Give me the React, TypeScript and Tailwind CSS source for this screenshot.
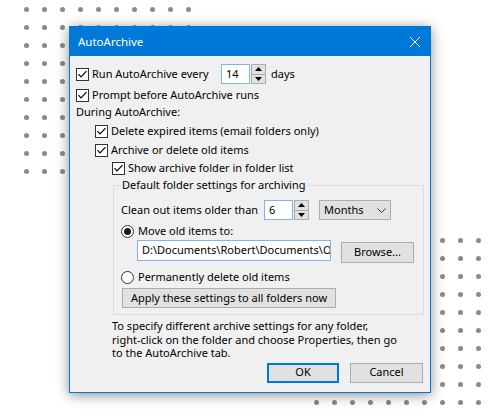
const dots = Array.from({ length: 100 });

function DotGrid({ className }: { className: string }) {
  return (
    <div className={`absolute grid grid-cols-10 ${className}`}>
      {dots.map((_, i) => (
        <div key={i} className="w-[18px] h-[18px] flex items-center justify-center">
          <div className="w-[5px] h-[5px] rounded-full bg-[#8a8a8a]" />
        </div>
      ))}
    </div>
  );
}

function Check() {
  return (
    <span className="w-[13px] h-[13px] border border-[#333] bg-white flex items-center justify-center shrink-0">
      <svg width="11" height="11" viewBox="0 0 11 11">
        <path d="M1.5 5.2 L4 7.8 L9.5 2.2" fill="none" stroke="#000" strokeWidth="1.2" />
      </svg>
    </span>
  );
}

function Radio({ on }: { on?: boolean }) {
  return (
    <span className="w-[13px] h-[13px] rounded-full border border-[#333] bg-white flex items-center justify-center shrink-0">
      {on && <span className="w-[7px] h-[7px] rounded-full bg-[#1a1a1a]" />}
    </span>
  );
}

function Spin() {
  return (
    <div className="ml-[1px] w-[15px] h-[20px] border border-[#adadad] bg-[#e1e1e1] flex flex-col">
      <div className="flex-1 flex items-center justify-center border-b border-[#adadad]">
        <svg width="7" height="4" viewBox="0 0 7 4">
          <path d="M0 4 L3.5 0 L7 4Z" fill="#000" />
        </svg>
      </div>
      <div className="flex-1 flex items-center justify-center">
        <svg width="7" height="4" viewBox="0 0 7 4">
          <path d="M0 0 L3.5 4 L7 0Z" fill="#000" />
        </svg>
      </div>
    </div>
  );
}

function CheckRow({ label, className = "" }: { label: string; className?: string }) {
  return (
    <div className={`h-[16px] flex items-center gap-[3px] ${className}`}>
      <Check />
      <span>{label}</span>
    </div>
  );
}

export default function App() {
  return (
    <div className="relative w-[500px] h-[420px] bg-white overflow-hidden pt-[26px] pl-[69px] font-['Noto_Sans',sans-serif] text-[11px] text-black">
      <DotGrid className="left-[17px] top-0" />
      <DotGrid className="left-[307px] top-[231px]" />

      <div className="relative w-[362px] h-[367px] bg-[#f0f0f0] border border-[#0078d7] shadow-[0_2px_12px_rgba(0,0,0,0.45)] flex flex-col">
        {/* Title bar */}
        <div className="h-[29px] bg-[#0078d7] flex items-center justify-between pl-[8px] pr-[10px] text-white text-[11.5px]">
          <span>AutoArchive</span>
          <svg width="10" height="10" viewBox="0 0 10 10">
            <path d="M0 0 L10 10 M10 0 L0 10" stroke="#fff" strokeWidth="1" />
          </svg>
        </div>

        <div className="flex-1 pl-[6px] pt-[8px] flex flex-col">
          <div className="h-[20px] flex items-center">
            <div className="w-[145px] flex items-center gap-[3px]">
              <Check />
              <span>Run AutoArchive every</span>
            </div>
            <div className="w-[29px] h-[20px] border border-[#84b4e6] bg-white flex items-center pl-[4px]">14</div>
            <Spin />
            <span className="ml-[5px]">days</span>
          </div>

          <CheckRow label="Prompt before AutoArchive runs" className="mt-[3px]" />
          <div className="h-[16px] mt-[1px] flex items-center">During AutoArchive:</div>
          <CheckRow label="Delete expired items (email folders only)" className="mt-[3px] pl-[19px]" />
          <CheckRow label="Archive or delete old items" className="mt-[3px] pl-[19px]" />
          <CheckRow label="Show archive folder in folder list" className="mt-[2px] pl-[36px]" />

          {/* Default folder settings group */}
          <fieldset className="ml-[37px] mt-[1px] w-[311px] border border-[#dcdcdc] pl-[7px] pb-[6px]">
            <legend className="px-[1px] leading-[16px]">Default folder settings for archiving</legend>

            <div className="mt-[7px] h-[20px] flex items-center">
              <span className="w-[143px]">Clean out items older than</span>
              <div className="w-[29px] h-[20px] border border-[#84b4e6] bg-white flex items-center pl-[4px]">6</div>
              <Spin />
              <div className="ml-[10px] w-[72px] h-[20px] border border-[#adadad] bg-[#e1e1e1] flex items-center justify-between pl-[4px] pr-[4px]">
                <span>Months</span>
                <svg width="9" height="5" viewBox="0 0 9 5">
                  <path d="M0.5 0.5 L4.5 4.5 L8.5 0.5" fill="none" stroke="#333" strokeWidth="1" />
                </svg>
              </div>
            </div>

            <div className="mt-[3px] h-[16px] flex items-center gap-[4px]">
              <Radio on />
              <span>Move old items to:</span>
            </div>

            <div className="mt-[1px] flex items-start">
              <div className="ml-[16px] w-[194px] h-[21px] border border-[#84b4e6] bg-white flex items-center pl-[4px] overflow-hidden whitespace-nowrap">
                D:\Documents\Robert\Documents\O
              </div>
              <div className="ml-[10px] mt-[2px] w-[73px] h-[21px] border border-[#adadad] bg-[#e1e1e1] flex items-center justify-center">
                Browse...
              </div>
            </div>

            <div className="mt-[6px] h-[16px] flex items-center gap-[4px]">
              <Radio />
              <span>Permanently delete old items</span>
            </div>

            <div className="mt-[3px] ml-[1px] w-[214px] h-[20px] border border-[#adadad] bg-[#e1e1e1] flex items-center justify-center">
              Apply these settings to all folders now
            </div>
          </fieldset>

          <p className="ml-[36px] mt-[4px] leading-[13.5px]">
            To specify different archive settings for any folder,
            <br />
            right-click on the folder and choose Properties, then go
            <br />
            to the AutoArchive tab.
          </p>

          <div className="mt-[3px] pr-[7px] flex justify-end gap-[11px]">
            <div className="w-[72px] h-[20px] border-2 border-[#0078d7] bg-[#e1e1e1] flex items-center justify-center">OK</div>
            <div className="w-[73px] h-[20px] border border-[#adadad] bg-[#e1e1e1] flex items-center justify-center">Cancel</div>
          </div>
        </div>
      </div>
    </div>
  );
}
